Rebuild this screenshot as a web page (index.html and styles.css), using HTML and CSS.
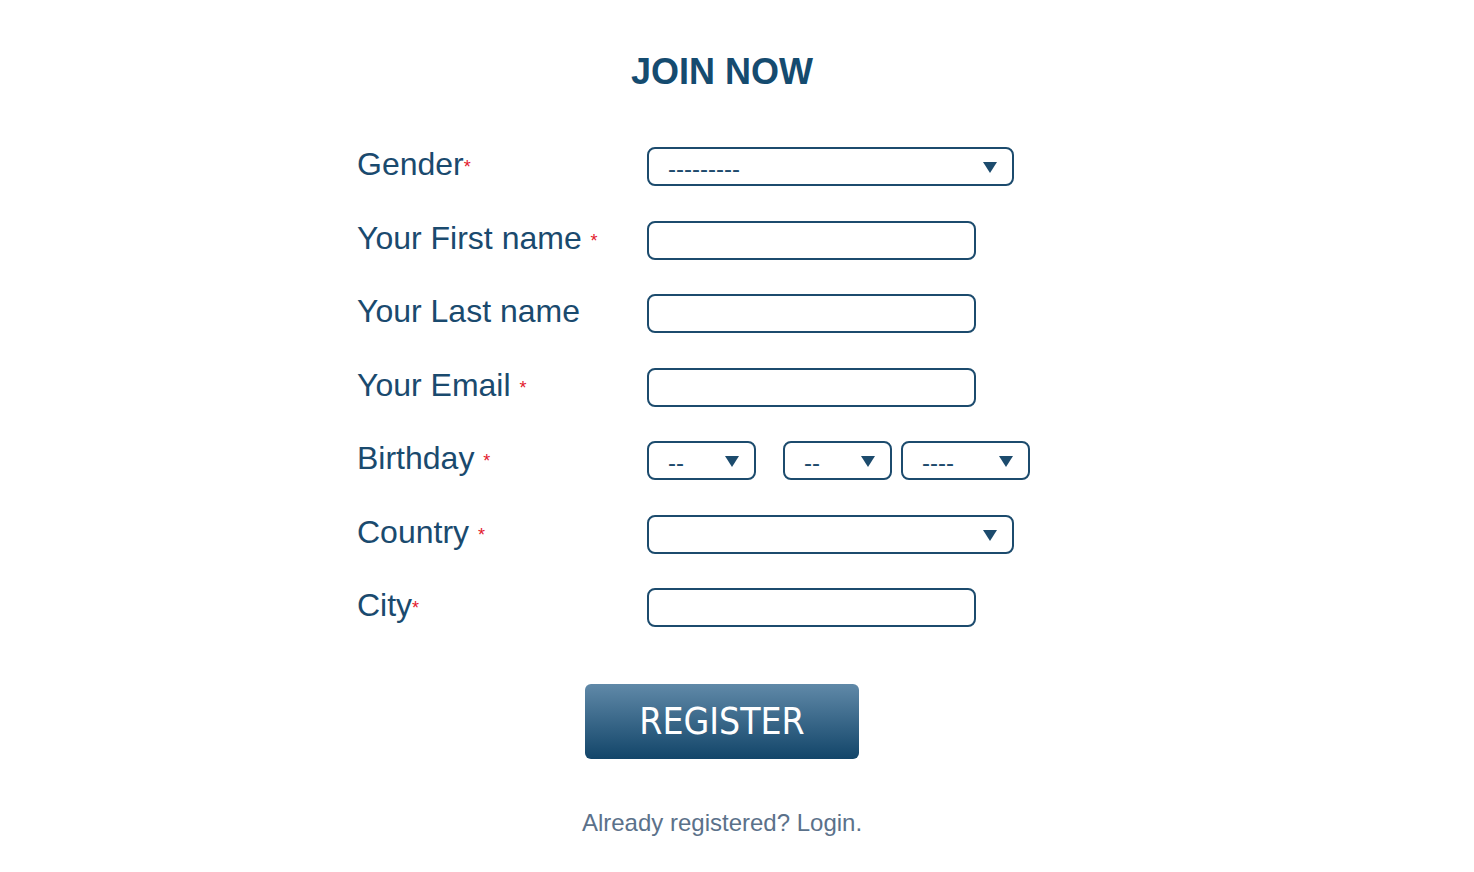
FILE: index.html
```html
<!DOCTYPE html>
<html lang="en">
<head>
    <meta charset="UTF-8">
    <meta name="viewport" content="width=device-width, initial-scale=1.0">
    <title>Join Now</title>
    <link rel="stylesheet" href="styles.css">
</head>
<body>
    <div class="page">
        <h1>JOIN NOW</h1>
        <form class="join-form" onsubmit="return false;">
            <div class="row">
                <label for="gender">Gender<span class="req">*</span></label>
                <div class="select-wrap wide">
                    <select id="gender">
                        <option>---------</option>
                        <option>Male</option>
                        <option>Female</option>
                    </select>
                    <svg class="arrow" viewBox="0 0 14 11"><path d="M0 0H14L7 11Z"/></svg>
                </div>
            </div>
            <div class="row">
                <label for="first-name">Your First name <span class="req">*</span></label>
                <input type="text" id="first-name">
            </div>
            <div class="row">
                <label for="last-name">Your Last name</label>
                <input type="text" id="last-name">
            </div>
            <div class="row">
                <label for="email">Your Email <span class="req">*</span></label>
                <input type="email" id="email">
            </div>
            <div class="row">
                <label for="day">Birthday <span class="req">*</span></label>
                <div class="date-group">
                    <div class="select-wrap day">
                        <select id="day"><option>--</option></select>
                        <svg class="arrow" viewBox="0 0 14 11"><path d="M0 0H14L7 11Z"/></svg>
                    </div>
                    <div class="select-wrap month">
                        <select id="month"><option>--</option></select>
                        <svg class="arrow" viewBox="0 0 14 11"><path d="M0 0H14L7 11Z"/></svg>
                    </div>
                    <div class="select-wrap year">
                        <select id="year"><option>----</option></select>
                        <svg class="arrow" viewBox="0 0 14 11"><path d="M0 0H14L7 11Z"/></svg>
                    </div>
                </div>
            </div>
            <div class="row">
                <label for="country">Country <span class="req">*</span></label>
                <div class="select-wrap wide">
                    <select id="country"><option></option></select>
                    <svg class="arrow" viewBox="0 0 14 11"><path d="M0 0H14L7 11Z"/></svg>
                </div>
            </div>
            <div class="row">
                <label for="city">City<span class="req">*</span></label>
                <input type="text" id="city">
            </div>
            <div class="actions">
                <button type="submit">REGISTER</button>
            </div>
        </form>
        <p class="login">Already registered? Login.</p>
    </div>
</body>
</html>
```

FILE: styles.css
```css
body {
    margin: 0;
    padding-right: 30px;
    background-color: #fff;
    color: #154b6f;
    font-family: "Liberation Sans", Arial, sans-serif;
}
.page {
    width: 730px;
    margin: 0 auto;
}
h1 {
    margin: 52px 0 0;
    font-size: 36px;
    line-height: 40px;
    font-weight: bold;
    text-align: center;
    color: #154b6f;
}
.join-form {
    margin-top: 55px;
}
.row {
    display: flex;
    align-items: flex-start;
    height: 39px;
    margin-bottom: 34.5px;
}
.row label {
    width: 290px;
    flex-shrink: 0;
    font-size: 32px;
    line-height: 35px;
    color: #1a4a6e;
}
.req {
    color: #e3182d;
    font-size: 18px;
    vertical-align: 2px;
}
input, select {
    box-sizing: border-box;
    height: 39px;
    border: 2px solid #1c4b6d;
    border-radius: 8px;
    background-color: #fff;
    font-family: "Liberation Sans", Arial, sans-serif;
    font-size: 24px;
    color: #1c4b6d;
    outline: none;
}
input {
    width: 329px;
    padding: 0 12px;
}
select {
    width: 100%;
    padding: 4px 30px 0 19px;
    -webkit-appearance: none;
    appearance: none;
    cursor: pointer;
}
.select-wrap {
    position: relative;
    height: 39px;
}
.select-wrap.wide {
    width: 367px;
}
.select-wrap.day,
.select-wrap.month {
    width: 109px;
}
.select-wrap.year {
    width: 129px;
}
.arrow {
    position: absolute;
    top: 15px;
    right: 17px;
    width: 14px;
    height: 11px;
    fill: #1c4b6d;
    pointer-events: none;
}
.date-group {
    display: flex;
    gap: 9px;
}
.date-group .month {
    margin-left: 18px;
}
.actions {
    display: flex;
    justify-content: center;
    margin-top: 57px;
}
button {
    width: 274px;
    height: 75px;
    border: none;
    border-radius: 6px;
    background: linear-gradient(to bottom, #6089a8, #124569);
    color: #fff;
    font-family: "DejaVu Sans Condensed", "DejaVu Sans", sans-serif;
    font-stretch: condensed;
    font-size: 37px;
    cursor: pointer;
}
.login {
    margin: 50px 0 0;
    font-size: 24px;
    line-height: 28px;
    text-align: center;
    color: #5b718a;
}
```
